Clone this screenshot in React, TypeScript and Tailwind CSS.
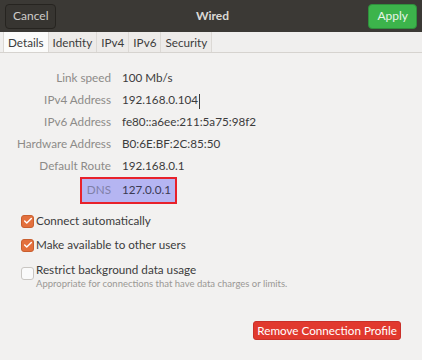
import { Check } from "lucide-react";

const rows = [
  ["Link speed", "100 Mb/s"],
  ["IPv4 Address", "192.168.0.104"],
  ["IPv6 Address", "fe80::a6ee:211:5a75:98f2"],
  ["Hardware Address", "B0:6E:BF:2C:85:50"],
  ["Default Route", "192.168.0.1"],
];

const tabs = ["Details", "Identity", "IPv4", "IPv6", "Security"];

function Box({ checked }: { checked: boolean }) {
  return checked ? (
    <span className="flex h-[13px] w-[13px] shrink-0 items-center justify-center rounded-[3px] border border-[#c95f2f] bg-[#e3703d]">
      <Check className="h-[10px] w-[10px] text-white" strokeWidth={3.5} />
    </span>
  ) : (
    <span className="block h-[13px] w-[13px] shrink-0 rounded-[3px] border border-[#c9c6c2] bg-[#fafafa]" />
  );
}

export default function App() {
  return (
    <div className="flex h-[360px] w-[422px] flex-col bg-[#f2f1f0] font-['Lato',sans-serif] text-[11.7px] text-[#3c3c3c]">
      <div className="flex h-[32px] items-center justify-between bg-[#3b3935] px-[5px]">
        <button className="h-[25px] rounded-[4px] border border-[#262420] bg-[#373531] px-[7px] text-[12px] text-[#cfcdca]">
          Cancel
        </button>
        <span className="text-[12px] font-bold text-[#dcdad6]">Wired</span>
        <button className="h-[25px] rounded-[4px] border border-[#2f8f3c] bg-[#3cb44b] px-[8px] text-[12px] text-[#e8f5e9]">
          Apply
        </button>
      </div>

      <div className="flex h-[21px] items-end border-b border-[#d6d3cf] bg-[#f0efee] pl-[3px]">
        {tabs.map((t, i) => (
          <span
            key={t}
            className={`h-[20px] border-r border-[#dcd9d5] px-[4px] leading-[20px] ${
              i === 0 ? "border-l bg-[#fbfbfa]" : "bg-[#edebe9]"
            }`}
          >
            {t}
          </span>
        ))}
      </div>

      <div className="mt-[16px] flex flex-col gap-[4px]">
        {rows.map(([l, v]) => (
          <div key={l} className="flex h-[18px] items-center">
            <span className="w-[111px] text-right text-[#8d8b88]">{l}</span>
            <span className="ml-[11px]">
              {v}
              {l === "IPv4 Address" && <span className="ml-px inline-block h-[15px] w-px bg-[#3c3c3c] align-middle" />}
            </span>
          </div>
        ))}
        <div className="flex h-[18px] items-center">
          <div className="ml-[80px] mt-[4px] flex h-[27px] w-[97px] items-center border-2 border-[#e8212b] bg-[#b5b5f2]">
            <span className="w-[29px] text-right text-[#8080a8]">DNS</span>
            <span className="ml-[11px] text-[#3a3a52]">127.0.0.1</span>
          </div>
        </div>
      </div>

      <div className="mt-[15px] flex flex-col pl-[21px]">
        <label className="flex h-[18px] items-center gap-[2px]">
          <Box checked />
          <span>Connect automatically</span>
        </label>
        <label className="mt-[6px] flex h-[18px] items-center gap-[2px]">
          <Box checked />
          <span>Make available to other users</span>
        </label>
        <label className="mt-[6px] flex gap-[2px]">
          <span className="mt-[7px]">
            <Box checked={false} />
          </span>
          <span className="flex flex-col">
            <span className="leading-[18px]">Restrict background data usage</span>
            <span className="text-[9.5px] leading-[11px] text-[#9a9895]">
              Appropriate for connections that have data charges or limits.
            </span>
          </span>
        </label>
      </div>

      <div className="mb-[20px] mt-auto flex justify-end pr-[21px]">
        <button className="h-[19px] rounded-[3px] border border-[#c9302a] bg-[#e1392e] px-[3px] leading-[17px] text-white">
          Remove Connection Profile
        </button>
      </div>
    </div>
  );
}
